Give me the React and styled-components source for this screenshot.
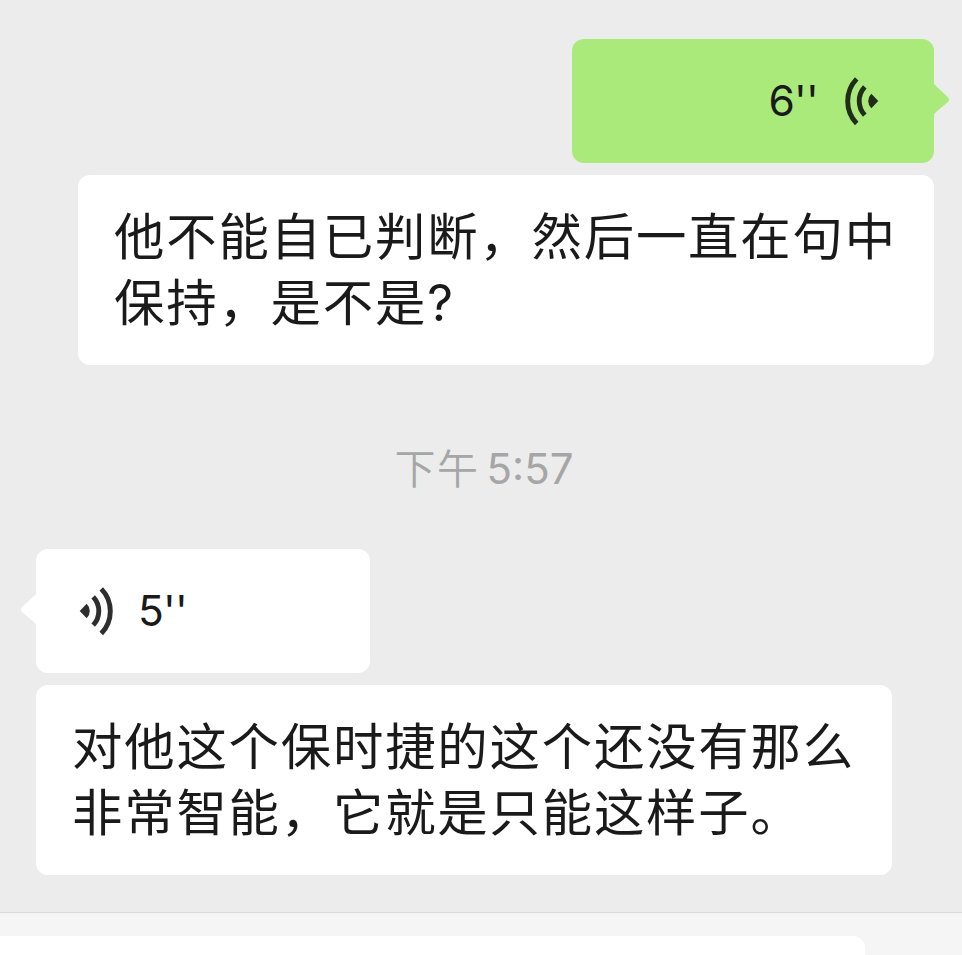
import React from 'react';
import styled, { createGlobalStyle } from 'styled-components';

const GlobalStyle = createGlobalStyle`
    * {
        box-sizing: border-box;
    }

    body {
        margin: 0;
        background: #ececec;
        font-family: 'Inter', 'Noto Sans CJK SC', sans-serif;
        color: #1a1a1a;
    }
`;

const Screen = styled.div`
    display: flex;
    flex-direction: column;
    height: 955px;
    overflow: hidden;
    background: #ececec;
`;

const Messages = styled.main`
    display: flex;
    flex-direction: column;
    height: 912px;
    padding: 39px 28px 0 36px;
`;

const Group = styled.section`
    display: flex;
    flex-direction: column;
    align-items: ${({ $mine }) => ($mine ? 'flex-end' : 'flex-start')};
    gap: 12px;
`;

const VoiceBubble = styled.div`
    position: relative;
    display: flex;
    flex-direction: ${({ $mine }) => ($mine ? 'row' : 'row-reverse')};
    align-items: center;
    justify-content: flex-end;
    gap: ${({ $mine }) => ($mine ? '24px' : '22px')};
    width: ${({ $mine }) => ($mine ? '362px' : '334px')};
    height: 124px;
    padding: ${({ $mine }) => ($mine ? '0 52px 0 0' : '0 0 0 40px')};
    border-radius: 12px;
    background: ${({ $mine }) => ($mine ? '#a9ea7a' : '#fff')};
`;

const Tail = styled.svg`
    position: absolute;
    top: 40px;
    ${({ $mine }) => ($mine ? 'right: -15px;' : 'left: -15px; transform: scaleX(-1);')}
    width: 16px;
    height: 42px;
    fill: ${({ $mine }) => ($mine ? '#a9ea7a' : '#fff')};
`;

const Waves = styled.svg`
    flex: none;
    width: 40px;
    height: 50px;
    color: ${({ $mine }) => ($mine ? '#222c19' : '#2e2e2e')};
    ${({ $mine }) => !$mine && 'transform: scaleX(-1);'}
`;

const Duration = styled.span`
    font-size: 42.5px;
    line-height: 50px;
    letter-spacing: -0.8px;
`;

const Transcript = styled.p`
    width: 856px;
    height: 190px;
    margin: 0;
    padding: 29px 0 0 36px;
    border-radius: 12px;
    background: #fff;
    font-size: 50.4px;
    line-height: 66px;
    letter-spacing: 1.8px;
    white-space: nowrap;
`;

const Time = styled.time`
    display: flex;
    align-items: center;
    justify-content: center;
    gap: 7px;
    height: 184px;
    padding: 22px 2px 0 0;
    font-size: 42px;
    color: #a6a6a6;
`;

const Period = styled.span`
    padding-bottom: 4px;
    font-size: 41px;
    font-weight: 350;
    letter-spacing: 1.5px;
`;

const InputBar = styled.footer`
    height: 43px;
    padding-top: 23px;
    border-top: 1px solid #d9d9d9;
    background: #f5f5f5;
`;

const InputBox = styled.div`
    width: 865px;
    height: 40px;
    border-radius: 0 12px 0 0;
    background: #fff;
`;

function Voice({ mine, seconds }) {
    return (
        <VoiceBubble $mine={mine}>
            <Duration>{seconds}''</Duration>
            <Waves $mine={mine} viewBox="0 0 40 50">
                <g fill="none" stroke="currentColor" strokeWidth="4.9">
                    <path d="M14.7 2.9A32.1 32.1 0 0 0 14.7 47.5" />
                    <path d="M22.8 10.8A20.8 20.8 0 0 0 22.8 39.2" />
                </g>
                <path d="M29.3 17.8L36.3 25L29.3 32.2Q26.2 29 26.2 25T29.3 17.8Z" fill="currentColor" />
            </Waves>
            <Tail $mine={mine} viewBox="0 0 16 42">
                <path d="M0 3Q1 5 3 7L15 18.2Q17 20.5 15 23L3 33Q1 35 0 38Z" />
            </Tail>
        </VoiceBubble>
    );
}

function App() {
    return (
        <>
            <GlobalStyle />
            <Screen>
                <Messages>
                    <Group $mine>
                        <Voice mine seconds={6} />
                        <Transcript>
                            他不能自已判断，然后一直在句中
                            <br />
                            保持，是不是?
                        </Transcript>
                    </Group>
                    <Time>
                        <Period>下午</Period>
                        <span>5:57</span>
                    </Time>
                    <Group>
                        <Voice seconds={5} />
                        <Transcript>
                            对他这个保时捷的这个还没有那么
                            <br />
                            非常智能，它就是只能这样子。
                        </Transcript>
                    </Group>
                </Messages>
                <InputBar>
                    <InputBox />
                </InputBar>
            </Screen>
        </>
    );
}

export default App;
